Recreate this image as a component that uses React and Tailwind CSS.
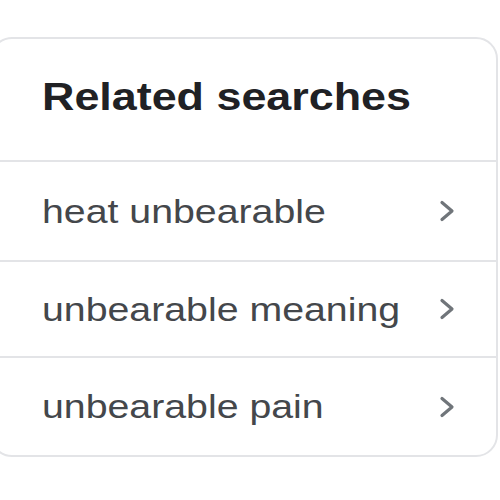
const searches = [
  { text: 'heat unbearable', h: 'h-[100px]' },
  { text: 'unbearable meaning', h: 'h-[96px]' },
  { text: 'unbearable pain', h: 'h-[99px]' },
];

function Chevron() {
  return (
    <svg width="18" height="24" viewBox="0 0 18 24" fill="none" className="shrink-0">
      <path d="M4 3.5 L14 12 L4 20.5" stroke="#70757a" strokeWidth="3.2" strokeLinecap="round" strokeLinejoin="round" />
    </svg>
  );
}

export default function App() {
  return (
    <div className="w-[500px] h-[500px] overflow-hidden bg-white font-['Liberation_Sans',Arial,sans-serif]">
      <div className="mt-[37px] ml-[-10px] w-[508px] border-2 border-[#e3e4e7] rounded-[22px] overflow-hidden">
        {/* Header */}
        <div className="h-[121px] flex items-center pl-[50px] pb-[6px]">
          <span className="block origin-left scale-x-[1.15] text-[39px] leading-none font-bold text-[#202124]">
            Related searches
          </span>
        </div>

        {searches.map((s) => (
          <div
            key={s.text}
            className={`${s.h} border-t-2 border-[#e3e4e7] flex items-center justify-between pl-[50px] pr-[40px]`}
          >
            <span className="block origin-left scale-x-[1.19] text-[33px] leading-none text-[#44474b]">
              {s.text}
            </span>
            <Chevron />
          </div>
        ))}
      </div>
    </div>
  );
}
